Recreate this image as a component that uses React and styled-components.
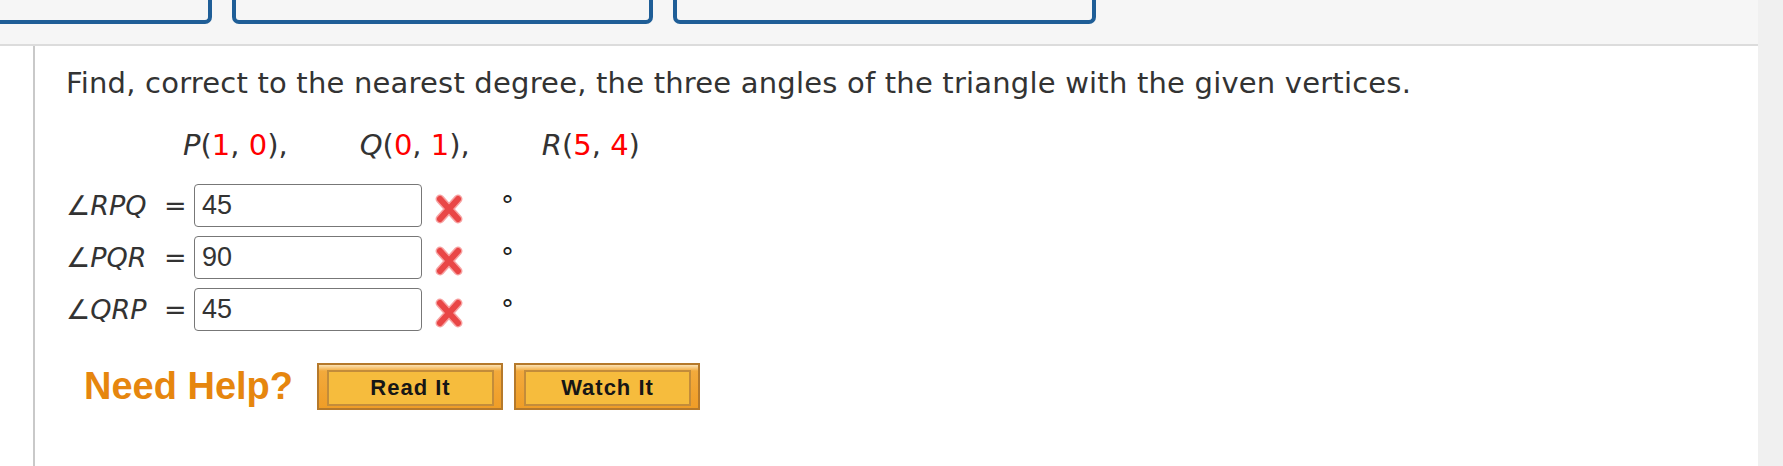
import styled, { createGlobalStyle } from 'styled-components';

const GlobalStyle = createGlobalStyle`
  html, body {
    margin: 0;
    padding: 0;
    height: 100%;
    background: #fff;
  }
  #root {
    height: 100%;
  }
`;

const points = [
  { name: 'P', a: '1', b: '0', comma: true },
  { name: 'Q', a: '0', b: '1', comma: true },
  { name: 'R', a: '5', b: '4', comma: false },
];

const answers = [
  { label: 'RPQ', value: '45' },
  { label: 'PQR', value: '90' },
  { label: 'QRP', value: '45' },
];

function WrongMark() {
  return (
    <SMark viewBox="0 0 28 30" width="28" height="30">
      <g strokeLinecap="round">
        <path d="M5 5 L23 25 M23 5 L5 25" stroke="#f7a3a3" strokeWidth="9" />
        <path d="M5 5 L23 25 M23 5 L5 25" stroke="#e94646" strokeWidth="6" />
      </g>
    </SMark>
  );
}

export default function App() {
  return (
    <SPage>
      <GlobalStyle />
      <SMain>
        <STopBar>
          <STab $w={232} $first />
          <STab $w={421} />
          <STab $w={423} />
        </STopBar>
        <SContent>
          <SPrompt>Find, correct to the nearest degree, the three angles of the triangle with the given vertices.</SPrompt>
          <SPoints>
            {points.map((p) => (
              <SPoint key={p.name}>
                <SVar>{p.name}</SVar>(<SNum>{p.a}</SNum>, <SNum>{p.b}</SNum>){p.comma ? ',' : ''}
              </SPoint>
            ))}
          </SPoints>
          <SAnswers>
            {answers.map((row) => (
              <SRow key={row.label}>
                <SLabel>∠<SVar>{row.label}</SVar></SLabel>
                <SEq>=</SEq>
                <SInput defaultValue={row.value} readOnly />
                <WrongMark />
                <SDegree>°</SDegree>
              </SRow>
            ))}
          </SAnswers>
          <SHelp>
            <SHelpText>Need Help?</SHelpText>
            <SHelpButton>
              <SHelpInner>Read It</SHelpInner>
            </SHelpButton>
            <SHelpButton>
              <SHelpInner>Watch It</SHelpInner>
            </SHelpButton>
          </SHelp>
        </SContent>
      </SMain>
      <SScrollTrack />
    </SPage>
  );
}

const SPage = styled.div`
  display: flex;
  height: 100vh;
  overflow: hidden;
  font-family: 'DejaVu Sans', Verdana, sans-serif;
  color: #333;
`;

const SMain = styled.div`
  flex: 1;
  display: flex;
  flex-direction: column;
  min-width: 0;
`;

const SScrollTrack = styled.div`
  width: 25px;
  background: #f0f0f0;
`;

const STopBar = styled.div`
  height: 44px;
  background: #f6f6f6;
  border-bottom: 2px solid #dcdcdc;
  display: flex;
  align-items: flex-start;
  gap: 20px;
  overflow: hidden;
`;

const STab = styled.div`
  box-sizing: border-box;
  flex: none;
  width: ${(p) => p.$w}px;
  height: 24px;
  margin-left: ${(p) => (p.$first ? '-20px' : '0')};
  border: 4px solid #1f5e97;
  border-top: none;
  border-radius: 0 0 7px 7px;
`;

const SContent = styled.div`
  flex: 1;
  margin-left: 33px;
  border-left: 2px solid #c9c9c9;
  padding: 20px 0 0 31px;
`;

const SPrompt = styled.div`
  font-size: 29px;
  letter-spacing: 0.2px;
  line-height: 34px;
`;

const SPoints = styled.div`
  display: flex;
  gap: 72px;
  margin-top: 28px;
  padding-left: 117px;
  font-size: 29px;
  line-height: 34px;
`;

const SPoint = styled.span`
  white-space: pre;
`;

const SVar = styled.span`
  font-style: italic;
`;

const SNum = styled.span`
  color: #f00;
`;

const SAnswers = styled.div`
  display: grid;
  grid-template-columns: 96px 32px 228px 41px auto;
  row-gap: 9px;
  margin-top: 22px;
`;

const SRow = styled.div`
  display: contents;
`;

const SLabel = styled.span`
  align-self: center;
  font-size: 27px;
  white-space: nowrap;
`;

const SEq = styled.span`
  align-self: center;
  padding-left: 2px;
  font-size: 27px;
`;

const SInput = styled.input`
  box-sizing: border-box;
  width: 228px;
  height: 43px;
  margin: 0;
  padding: 0 7px;
  border: 1.5px solid #777;
  border-radius: 4px;
  font-family: 'Liberation Sans', Arial, sans-serif;
  font-size: 27px;
  color: #333;
  background: #fff;
  outline: none;
`;

const SMark = styled.svg`
  justify-self: end;
  align-self: center;
  margin-top: 7px;
`;

const SDegree = styled.span`
  align-self: start;
  padding-left: 38px;
  font-size: 26px;
  line-height: 26px;
  margin-top: 9px;
  color: #222;
`;

const SHelp = styled.div`
  display: flex;
  align-items: center;
  margin-top: 32px;
  padding-left: 18px;
`;

const SHelpText = styled.span`
  width: 233px;
  font-family: 'Liberation Sans', Arial, sans-serif;
  font-weight: bold;
  font-size: 38px;
  color: #e6860e;
`;

const SHelpButton = styled.div`
  box-sizing: border-box;
  width: 186px;
  height: 47px;
  margin-right: 11px;
  padding: 5px 7px 2px 8px;
  border: 2px solid #b5792b;
  background: linear-gradient(#fbe2b4 0, #f3aa3c 6px, #ef9d27 100%);
  display: flex;
`;

const SHelpInner = styled.div`
  flex: 1;
  display: flex;
  align-items: center;
  justify-content: center;
  border: 2px solid #c38c3a;
  background: #f6bc3d;
  font-family: 'Liberation Sans', Arial, sans-serif;
  font-weight: bold;
  font-size: 22px;
  letter-spacing: 1px;
  color: #161616;
`;
